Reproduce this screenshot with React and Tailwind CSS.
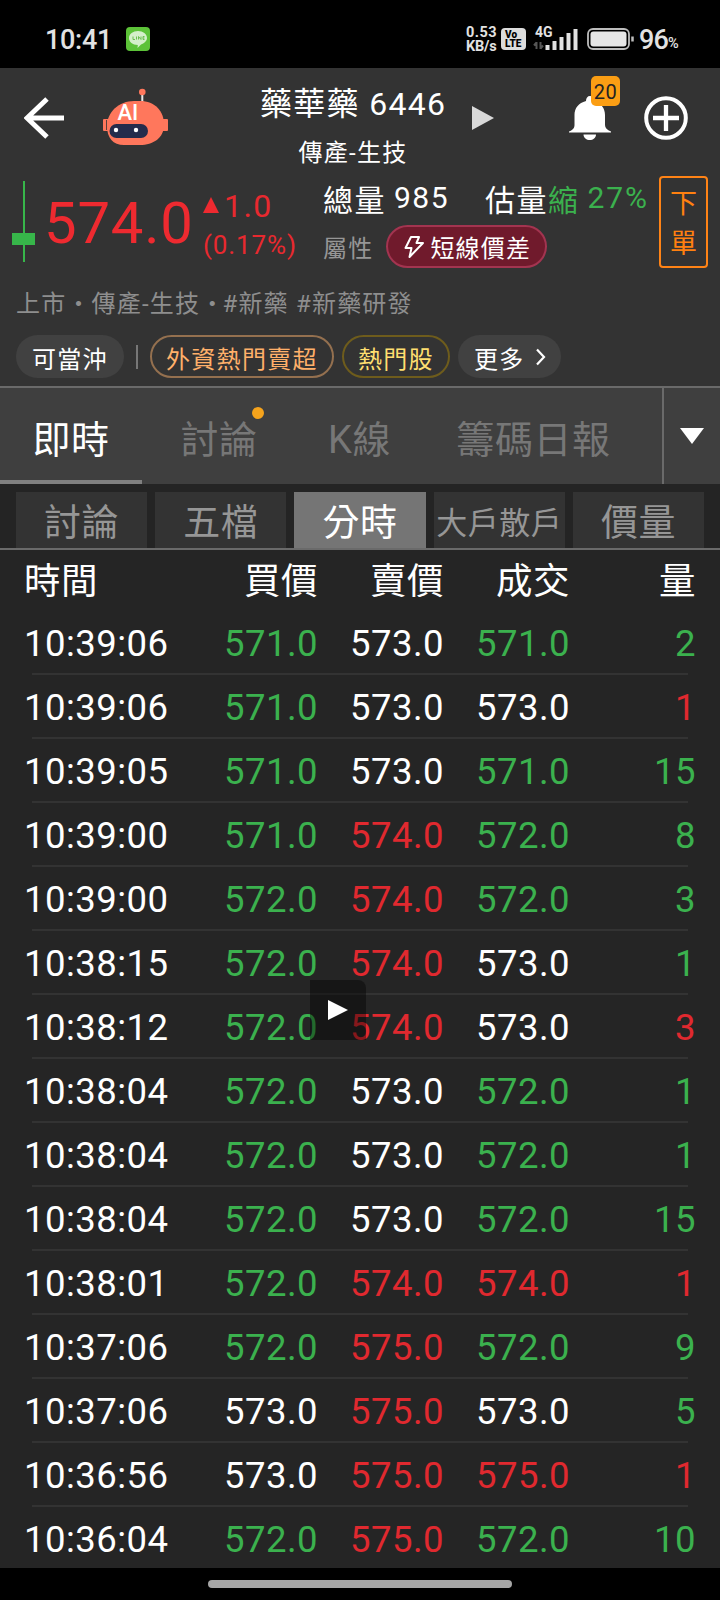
import React, { useState } from 'react';

const mainTabs = [
  { name: '即時', width: 'w-[142px]' },
  { name: '討論', width: 'w-[154px]', dot: true },
  { name: 'K線', width: 'w-[127px]' },
  { name: '籌碼日報', width: 'w-[221px]' },
];

const subTabs = ['討論', '五檔', '分時', '大戶散戶', '價量'];

const PREV_CLOSE = 573;

// time, bid, ask, deal, volume, side of the trade
const ticks = [
  ['10:39:06', 571, 573, 571, 2, 'sell'],
  ['10:39:06', 571, 573, 573, 1, 'buy'],
  ['10:39:05', 571, 573, 571, 15, 'sell'],
  ['10:39:00', 571, 574, 572, 8, 'sell'],
  ['10:39:00', 572, 574, 572, 3, 'sell'],
  ['10:38:15', 572, 574, 573, 1, 'sell'],
  ['10:38:12', 572, 574, 573, 3, 'buy'],
  ['10:38:04', 572, 573, 572, 1, 'sell'],
  ['10:38:04', 572, 573, 572, 1, 'sell'],
  ['10:38:04', 572, 573, 572, 15, 'sell'],
  ['10:38:01', 572, 574, 574, 1, 'buy'],
  ['10:37:06', 572, 575, 572, 9, 'sell'],
  ['10:37:06', 573, 575, 573, 5, 'sell'],
  ['10:36:56', 573, 575, 575, 1, 'buy'],
  ['10:36:04', 572, 575, 572, 10, 'sell'],
];

const priceColor = (price) => {
  if (price > PREV_CLOSE) return 'text-[#e0292f]';
  if (price < PREV_CLOSE) return 'text-[#3bb14e]';
  return 'text-white';
};

const StatusBar = () => (
  <div className="flex h-[68px] shrink-0 items-center bg-black pt-[10px] text-[#e2e2e2]">
    <span className="mt-[2px] ml-[45px] w-[81px] text-[27px] leading-[30px] font-medium tracking-[-0.3px]">10:41</span>
    <svg width="24" height="24" viewBox="0 0 24 24">
      <rect width="24" height="24" rx="4" fill="#5cc238" />
      <path d="M12 4c5 0 9 3 9 7 0 3-3 5.500-6 6.500L11.500 21l.3-3C6.500 18 3 15 3 11s4-7 9-7z" fill="#d4efca" />
      <path d="M7 9.500v3h2M10.500 9.500v3M12.500 12.500v-3l2.500 3v-3M18.500 9.500H17v3h1.500M17 11h1.500" stroke="#6abf4f" strokeWidth="1" fill="none" />
    </svg>
    <div className="mt-px ml-[316px] w-[31px] text-[14.500px] leading-[14px] font-bold">
      <div className="tracking-[0.500px]">0.53</div>
      <div className="tracking-[-0.2px]">KB/s</div>
    </div>
    <div className="ml-[4px] flex h-[22px] w-[25px] flex-col justify-center rounded-[4px] bg-[#dcdcdc] pl-[4px] text-[10px] leading-[9px] font-black text-black">
      <span>Vo</span>
      <span>LTE</span>
    </div>
    <div className="relative ml-[7px] h-[24px] w-[46px]">
      <span className="absolute top-0 left-[2px] text-[14px] leading-[11px] font-bold">4G</span>
      <svg className="absolute inset-0" width="46" height="24" viewBox="0 0 46 24">
        <path d="M3.500 22v-7M1 18.500l2.500-3M7.500 15v7M10 18.500l-2.500 3" stroke="#555" strokeWidth="2" fill="none" />
        <path d="M14.500 18v5M21.500 14v9M28.500 10v13M35.500 6v17M42.500 2v21" stroke="#e2e2e2" strokeWidth="4" />
      </svg>
    </div>
    <svg className="ml-[8px]" width="48" height="22" viewBox="0 0 48 22">
      <rect x="1" y="1" width="41" height="20" rx="5" fill="none" stroke="#bdbdbd" strokeWidth="1.800" />
      <rect x="3.500" y="3.500" width="36" height="15" rx="3" fill="#e6e6e6" />
      <path d="M45.500 8.500v5" stroke="#bdbdbd" strokeWidth="2.500" />
    </svg>
    <span className="mt-[2px] ml-[4px] text-[27px] leading-[30px] font-medium tracking-[-0.8px]">96</span>
    <span className="mt-[9px] text-[14.500px] leading-[14px] font-medium">%</span>
  </div>
);

const Robot = () => (
  <svg className="ml-[39px]" width="66" height="58" viewBox="0 0 66 58">
    <path d="M39.300 5v12" stroke="#e8e8e8" strokeWidth="2" />
    <circle cx="39.300" cy="4" r="3.300" fill="#ff775c" />
    <rect x="0" y="31" width="7" height="12" rx="1" fill="#ff775c" />
    <rect x="56" y="31" width="9" height="12" rx="1" fill="#ff775c" />
    <path d="M4 38C4 24 16 13 31 13h6c15 0 24 10 24 24 0 13-11 20-24 20H21C10 57 4 50 4 38z" fill="#ff775c" />
    <path d="M3.500 32v10" stroke="#333" strokeWidth=".8" />
    <rect x="6.500" y="36" width="38.500" height="14" rx="7" fill="#252c4c" />
    <circle cx="13" cy="42" r="2.200" fill="#fff" />
    <circle cx="33" cy="42" r="2.200" fill="#fff" />
    <text x="14.500" y="31.500" fill="#fff" fontSize="22" fontFamily="Roboto" fontWeight="500">AI</text>
  </svg>
);

const TitleBar = () => (
  <div className="flex h-[102px] items-start">
    <svg className="mt-[29px] ml-6" width="40" height="42" viewBox="0 0 40 42">
      <path d="M40 21H4M23 2L3 21l20 19" stroke="#fff" strokeWidth="5" fill="none" />
    </svg>
    <div className="mt-[20px]">
      <Robot />
    </div>
    <div className="mt-[15px] ml-[91px] w-[186px] text-center whitespace-nowrap text-white">
      <h1 className="text-[32px] leading-[42px] tracking-[1.300px]">藥華藥 6446</h1>
      <p className="mt-[12px] text-[24px] leading-[32px] tracking-[1.300px]">傳產-生技</p>
    </div>
    <svg className="mt-[38px] ml-[26px]" width="22" height="24" viewBox="0 0 22 24">
      <path d="M0 0l22 12L0 24z" fill="#d9d9d9" />
    </svg>
    <div className="relative mt-[8px] ml-[75px] h-[66px] w-[52px]">
      <svg className="absolute top-[20px] left-0" width="42" height="44" viewBox="0 0 42 44">
        <path d="M21 0c2.500 0 4 2 4 5 7 2 11 7 11 14v10c0 3 2 5 6 6.500v1H0v-1C4 34 5.500 32 5.500 29V19C5.500 12 9.500 7 17 5c0-3 1.500-5 4-5z" fill="#fff" />
        <path d="M14.500 38.500h12.500c0 3.500-3 5.500-6.250 5.500s-6.250-2-6.250-5.500z" fill="#fff" />
      </svg>
      <span className="absolute top-0 left-[22px] flex h-[30px] w-[29px] items-center justify-center rounded-[5px] bg-[#fb9e14] pt-[2px] text-[20px] tracking-[0.500px] text-[#222]">
        20
      </span>
    </div>
    <svg className="mt-[28px] ml-[23px]" width="44" height="44" viewBox="0 0 44 44" fill="none" stroke="#fff">
      <circle cx="22" cy="22" r="19.800" strokeWidth="4" />
      <path d="M22 9v26M9 22h26" strokeWidth="4.300" />
    </svg>
  </div>
);

const Quote = () => (
  <div className="flex h-[107px] items-start whitespace-nowrap">
    <svg className="mt-[11px] ml-[12px]" width="23" height="82" viewBox="0 0 23 82">
      <path d="M12 0v81" stroke="#37b64a" strokeWidth="2" />
      <path d="M0 52h23v12H0z" fill="#37b64a" />
    </svg>
    <div className="mt-[20px] ml-[9px] w-[159px] text-[58px] leading-[66px] tracking-[0.800px] text-[#ee2a30]">574.0</div>
    <div className="w-[120px] text-[#e8292f]">
      <div className="mt-[16px] flex h-[40px] items-center">
        <svg width="16" height="16" viewBox="0 0 16 16" className="mb-[3px]">
          <path d="M8 0l8 16H0z" fill="#ee2a30" />
        </svg>
        <span className="ml-[5px] text-[32px] tracking-[1.400px]">1.0</span>
      </div>
      <div className="text-[26px] leading-[38px] tracking-[0.900px]">(0.17%)</div>
    </div>
    <div className="w-[336px] text-white">
      <div className="mt-[8px] flex h-[44px] items-center text-[30px] tracking-[1.500px]">
        <span>總量</span>
        <span className="mb-[5px] ml-[8px] tracking-[1.500px]">985</span>
        <span className="ml-[36px]">估量</span>
        <span className="text-[#3bb14e]">縮</span>
        <span className="mb-[5px] ml-[8px] tracking-[1.800px] text-[#3bb14e]">27%</span>
      </div>
      <div className="mt-[3px] flex h-[43px] items-center text-[24px] tracking-[1.200px]">
        <span className="mt-[4px] text-[#969696]">屬性</span>
        <div className="ml-[13px] flex h-[43px] w-[161px] items-center rounded-full border-2 border-[#a33450] bg-[#701a2c] pl-[16px]">
          <svg width="20" height="24" viewBox="0 0 20 24" fill="none" stroke="#fff" strokeWidth="2" strokeLinejoin="round">
            <path d="M7 2h8l-2.500 6H19L5.500 22l2-9H1.500z" />
          </svg>
          <span className="mt-[5px] ml-[6px]">短線價差</span>
        </div>
      </div>
    </div>
    <button className="mt-[6px] flex h-[92px] w-[49px] flex-col items-center justify-center rounded-[4px] border-2 border-[#ff8316] pt-[4px] text-[27px] leading-[40px] text-[#ff8010]">
      <span>下</span>
      <span>單</span>
    </button>
  </div>
);

const Chips = () => (
  <div className="flex h-[43px] items-center pl-4 text-[24px] leading-[46px] tracking-[1.300px] whitespace-nowrap">
    <span className="h-[43px] w-[108px] rounded-full bg-[#414141] pt-[2px] pl-[16px] text-white">可當沖</span>
    <span className="ml-[12px] h-[24px] w-[2px] bg-[#777]" />
    <span className="ml-[12px] h-[43px] w-[184px] rounded-full border-2 border-[#94704f] pl-[14px] text-[#ffb06a]">
      外資熱門賣超
    </span>
    <span className="ml-[8px] h-[43px] w-[108px] rounded-full border-2 border-[#6e5c1c] pl-[14px] text-[#ffdf70]">
      熱門股
    </span>
    <span className="ml-[8px] flex h-[43px] w-[103px] items-center rounded-full bg-[#414141] pl-[16px] text-white">
      <span className="pt-[6px]">更多</span>
      <svg className="ml-[10px]" width="12" height="18" viewBox="0 0 12 18">
        <path d="M2 1.500L9 9l-7 7.500" stroke="#fff" strokeWidth="2.200" fill="none" />
      </svg>
    </span>
  </div>
);

const TickTable = () => (
  <div className="relative h-[1018px] shrink-0 overflow-hidden bg-[#252525] text-[36.500px] tracking-[0.450px]">
    <div className="grid h-[61px] grid-cols-[168px_126px_126px_126px_126px] items-center px-6 pt-[4px] text-right text-white">
      <span className="text-left">時間</span>
      <span>買價</span>
      <span>賣價</span>
      <span>成交</span>
      <span>量</span>
    </div>
    {ticks.map(([time, bid, ask, deal, volume, side], index) => (
      <div key={index}>
        <div className="grid h-[62px] grid-cols-[168px_126px_126px_126px_126px] items-center px-6 pt-[5px] text-right">
          <span className="text-left text-white">{time}</span>
          <span className={priceColor(bid)}>{bid.toFixed(1)}</span>
          <span className={priceColor(ask)}>{ask.toFixed(1)}</span>
          <span className={priceColor(deal)}>{deal.toFixed(1)}</span>
          <span className={side === 'buy' ? 'text-[#e0292f]' : 'text-[#3bb14e]'}>{volume}</span>
        </div>
        <div className="mx-8 h-[2px] bg-[#333]" />
      </div>
    ))}
    {/* floating play button */}
    <button className="absolute top-[430px] left-[310px] flex h-[60px] w-[56px] items-center rounded-tr-[8px] bg-black/40 pl-[18px]">
      <svg width="20" height="20" viewBox="0 0 20 20">
        <path d="M0 0l20 10L0 20z" fill="#fff" />
      </svg>
    </button>
  </div>
);

const App = () => {
  const [mainTab, setMainTab] = useState('即時');
  const [subTab, setSubTab] = useState('分時');

  return (
    <div className="flex h-[1600px] w-[720px] flex-col overflow-hidden bg-black font-[Roboto,'Noto_Sans_CJK_TC',sans-serif]">
      <StatusBar />

      <div className="h-[318px] shrink-0 bg-[#333]">
        <TitleBar />
        <Quote />
        <div className="flex h-[58px] items-center pb-[5px] pl-4 text-[24px] tracking-[1.200px] whitespace-nowrap text-[#8e8e8e]">
          <span>上市・傳產-生技・</span>
          <span className="-ml-[3px]">#新藥 #新藥研發</span>
        </div>
        <Chips />
      </div>

      <div className="flex h-[98px] shrink-0 border-t-2 border-[#6a6a6a] bg-[#3f3f3f] text-[38px]">
        <div className="flex w-[662px]">
          {mainTabs.map((tab) => (
            <button
              key={tab.name}
              onClick={() => setMainTab(tab.name)}
              className={`relative border-b-4 pt-[12px] tracking-[0.600px] whitespace-nowrap ${tab.width}
                ${mainTab === tab.name ? 'border-[#808080] text-white' : 'border-transparent text-[#777]'}`}
            >
              {tab.name}
              {tab.dot && <span className="absolute top-[19px] right-[32px] h-[12px] w-[12px] rounded-full bg-[#f5a31c]" />}
            </button>
          ))}
        </div>
        <div className="flex w-[58px] items-center border-l-2 border-[#6a6a6a] pl-[16px]">
          <svg width="24" height="16" viewBox="0 0 24 16">
            <path d="M0 0h24L12 16z" fill="#fff" />
          </svg>
        </div>
      </div>

      <div className="grid h-[66px] shrink-0 grid-cols-5 gap-2 border-b-2 border-[#6a6a6a] bg-[#242424] px-4 pt-2">
        {subTabs.map((name) => (
          <button
            key={name}
            onClick={() => setSubTab(name)}
            className={`h-[56px] pt-[7px] leading-[49px] whitespace-nowrap ${name.length > 2 ? 'text-[31px]' : 'text-[37px]'} tracking-[0.500px]
              ${subTab === name ? 'bg-[#757575] text-white' : 'bg-[#333] text-[#969696]'}`}
          >
            {name}
          </button>
        ))}
      </div>

      <TickTable />

      <div className="flex h-[32px] items-center justify-center bg-black">
        <div className="h-[8px] w-[304px] rounded-full bg-[#a6a6a6]" />
      </div>
    </div>
  );
};

export default App;
